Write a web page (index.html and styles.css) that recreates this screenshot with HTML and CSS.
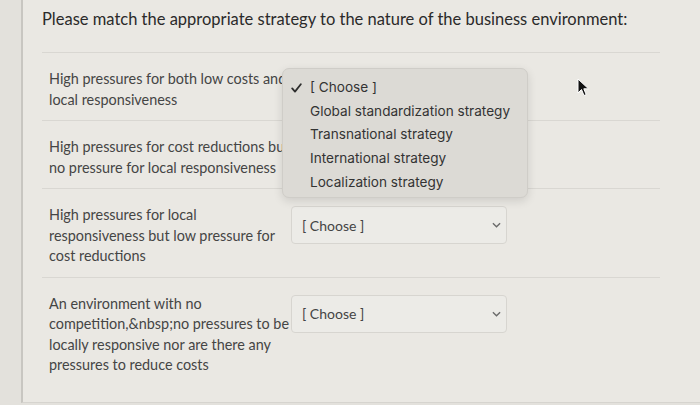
FILE: index.html
```html
<!DOCTYPE html>
<html lang="en">
<head>
<meta charset="utf-8">
<title>Matching question</title>
<link rel="stylesheet" href="styles.css">
</head>
<body>
<div class="card">
  <div class="title">Please match the appropriate strategy to the nature of the business environment:</div>
  <div class="rows">
    <div class="row">
      <div class="label">High pressures for both low costs and local responsiveness</div>
      <div class="select covered"><span>[ Choose ]</span><svg class="chev" viewBox="0 0 10 6" width="9" height="6"><path d="M1 1 L5 5 L9 1" fill="none" stroke="#6a6a6a" stroke-width="1.5"/></svg></div>
    </div>
    <div class="row">
      <div class="label">High pressures for cost reductions but no pressure for local responsiveness</div>
      <div class="select covered"><span>[ Choose ]</span><svg class="chev" viewBox="0 0 10 6" width="9" height="6"><path d="M1 1 L5 5 L9 1" fill="none" stroke="#6a6a6a" stroke-width="1.5"/></svg></div>
    </div>
    <div class="row">
      <div class="label">High pressures for local responsiveness but low pressure for cost reductions</div>
      <div class="select"><span>[ Choose ]</span><svg class="chev" viewBox="0 0 10 6" width="9" height="6"><path d="M1 1 L5 5 L9 1" fill="none" stroke="#6a6a6a" stroke-width="1.5"/></svg></div>
    </div>
    <div class="row last">
      <div class="label">An environment with no competition,&amp;nbsp;no pressures to be locally responsive nor are there any pressures to reduce costs</div>
      <div class="select"><span>[ Choose ]</span><svg class="chev" viewBox="0 0 10 6" width="9" height="6"><path d="M1 1 L5 5 L9 1" fill="none" stroke="#6a6a6a" stroke-width="1.5"/></svg></div>
    </div>
  </div>
</div>

<div class="menu">
  <div class="item checked"><svg class="check" viewBox="0 0 11 10" width="11" height="10"><path d="M1.2 5.4 L4 8.6 L9.8 1.2" fill="none" stroke="#2e2e2e" stroke-width="1.8" stroke-linecap="round" stroke-linejoin="round"/></svg>[ Choose ]</div>
  <div class="item">Global standardization strategy</div>
  <div class="item">Transnational strategy</div>
  <div class="item">International strategy</div>
  <div class="item">Localization strategy</div>
</div>

<svg class="cursor" viewBox="0 0 12 19" width="12" height="19">
  <path d="M1 1 L1 15 L4.5 11.5 L7 17.5 L9.2 16.6 L6.8 10.8 L11.5 10.8 Z" fill="#111" stroke="#fff" stroke-width="1"/>
</svg>
</body>
</html>
```

FILE: styles.css
```css
html, body {
  margin: 0;
  padding: 0;
}
body {
  background: #e3e1dc;
  width: 700px;
  height: 405px;
  overflow: hidden;
  position: relative;
  font-family: Lato, "Liberation Sans", sans-serif;
}
.card {
  margin-left: 21px;
  width: 657px;
  height: 402px;
  background: #eae8e3;
  border-left: 2px solid #c8c6c1;
  border-right: 1px solid #c8c6c1;
  border-bottom: 1px solid #d6d4cf;
  padding: 0 19px;
  box-sizing: content-box;
}
.title {
  font-size: 16.5px;
  color: #2a2a2a;
  height: 52px;
  padding-top: 7px;
  box-sizing: border-box;
  line-height: 24px;
}
.rows {
  border-top: 1px solid #d9d7d2;
  width: 618px;
}
.row {
  display: flex;
  padding: 16px 0 10px 7px;
  border-bottom: 1px solid #d9d7d2;
}
.row.last {
  border-bottom: none;
}
.label {
  width: 242px;
  flex: none;
  font-size: 14.4px;
  line-height: 20.5px;
  color: #454545;
}
.select {
  width: 216px;
  height: 38px;
  margin-top: 1px;
  box-sizing: border-box;
  border: 1px solid #d7d5d0;
  border-radius: 4px;
  background: #ecebe7;
  display: flex;
  align-items: center;
  justify-content: space-between;
  padding: 0 5px 0 10px;
  font-size: 14px;
  color: #444;
}
.select.covered span {
  visibility: hidden;
}
.chev {
  display: block;
}
.menu {
  position: absolute;
  left: 282px;
  top: 68px;
  width: 246px;
  height: 130px;
  box-sizing: border-box;
  padding: 7px 0 4px 27px;
  background: #dcdad5;
  border: 1px solid #cfcdc8;
  border-radius: 7px;
  box-shadow: 0 3px 10px rgba(0, 0, 0, 0.12);
  font-family: Inter, "Noto Sans", sans-serif;
  font-size: 13.6px;
  color: #333;
}
.item {
  height: 23.7px;
  line-height: 23.7px;
  position: relative;
  white-space: nowrap;
}
.check {
  position: absolute;
  left: -19px;
  top: 7px;
}
.cursor {
  position: absolute;
  left: 577px;
  top: 78px;
}
```
